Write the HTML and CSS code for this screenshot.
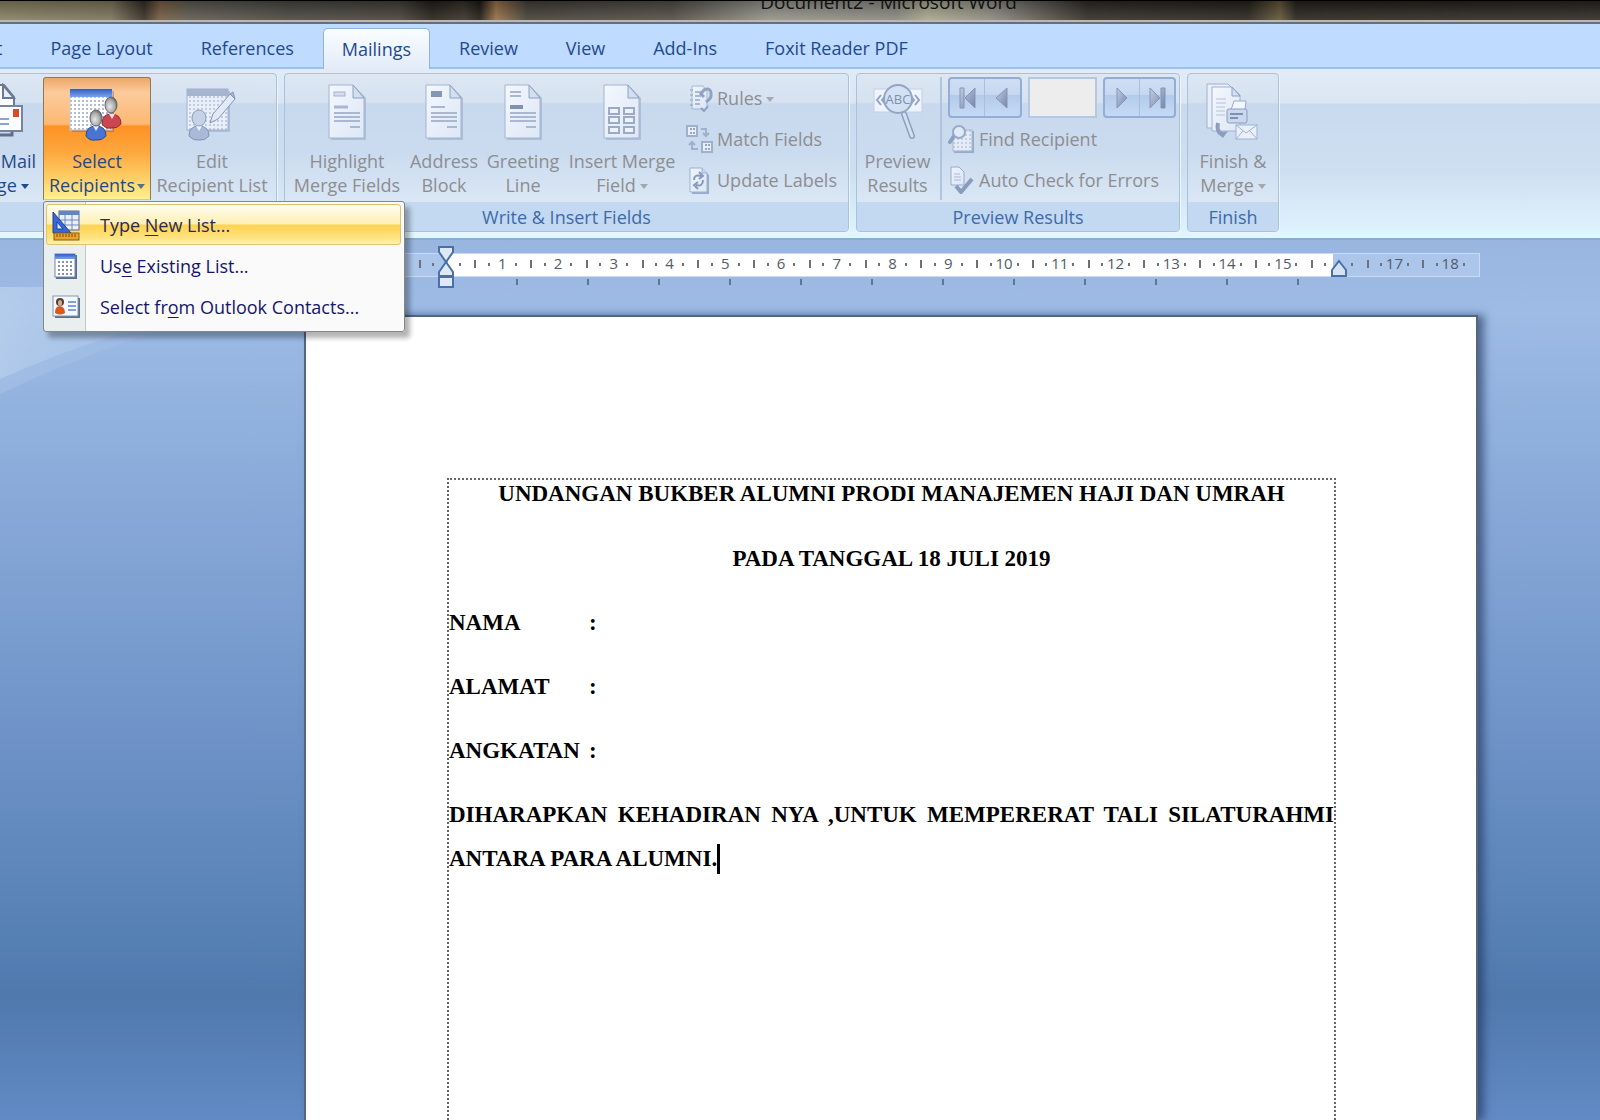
FILE: index.html
```html
<!DOCTYPE html>
<html lang="id">
<head>
  <meta charset="UTF-8">
  <title>Document2 - Microsoft Word</title>
  <link rel="stylesheet" href="styles.css">
</head>
<body>
  <!-- Shared icon parts -->
  <svg class="defs" aria-hidden="true">
    <defs>
      <linearGradient id="paper" x1="0" y1="0" x2="1" y2="1">
        <stop offset="0" stop-color="#f4f8fe"/>
        <stop offset="1" stop-color="#dde7f6"/>
      </linearGradient>
      <linearGradient id="tri" x1="0" y1="0" x2="1" y2="1">
        <stop offset="0" stop-color="#c3cde0"/>
        <stop offset="1" stop-color="#7286ab"/>
      </linearGradient>
      <linearGradient id="blueHead" x1="0" y1="0" x2="0" y2="1">
        <stop offset="0" stop-color="#2f5cc0"/>
        <stop offset="1" stop-color="#7ba3ec"/>
      </linearGradient>
      <radialGradient id="head" cx="0.4" cy="0.6" r="0.7">
        <stop offset="0" stop-color="#e8e8e8"/>
        <stop offset="0.6" stop-color="#a9a9a9"/>
        <stop offset="1" stop-color="#4c4c4c"/>
      </radialGradient>
      <pattern id="dots" width="4" height="4" patternUnits="userSpaceOnUse">
        <rect width="4" height="4" fill="#fff"/>
        <rect x="1" y="1" width="2" height="2" fill="#b3bccf"/>
      </pattern>
      <pattern id="dotsGray" width="4" height="4" patternUnits="userSpaceOnUse">
        <rect width="4" height="4" fill="#eaf0fa"/>
        <rect x="1" y="1" width="2" height="2" fill="#c2cde0"/>
      </pattern>
      <symbol id="page" viewBox="0 0 56 58">
        <path d="M12 4 H36 L47 15 V57 H12 Z" fill="#8fa2c2" opacity="0.5"/>
        <path d="M10 2 H34 L45 14 V55 H10 Z" fill="url(#paper)" stroke="#a3b4d1"/>
        <path d="M34 2 V15 H45 Z" fill="#d3dff1" stroke="#8ea1c2"/>
      </symbol>
    </defs>
  </svg>

  <header class="titlebar">
    <span class="title">Document2 - Microsoft Word</span>
  </header>

  <nav class="tabs">
    <a class="tab" href="#insert">Insert</a>
    <a class="tab" href="#layout">Page Layout</a>
    <a class="tab" href="#references">References</a>
    <a class="tab active" href="#mailings">Mailings</a>
    <a class="tab" href="#review">Review</a>
    <a class="tab" href="#view">View</a>
    <a class="tab" href="#addins">Add-Ins</a>
    <a class="tab" href="#foxit">Foxit Reader PDF</a>
  </nav>

  <div class="ribbon">
    <section class="group start-group">
      <div class="group-body">
        <button class="big" type="button">
          <svg class="icon" viewBox="0 0 56 58">
            <path d="M24 2 H36 L46 14 V30 H24 Z" fill="#fff" stroke="#6b7a94" stroke-width="2"/>
            <path d="M35 2 V15 H46 Z" fill="#e8eef8" stroke="#6b7a94" stroke-width="2"/>
            <path d="M22 52 H44 V44 H50 V36" fill="none" stroke="#5f6f8b" stroke-width="3"/>
            <rect x="14" y="23" width="40" height="25" fill="#fdfdff" stroke="#7485a3" stroke-width="2"/>
            <rect x="45" y="26" width="6" height="8" fill="#d9482b"/>
            <path d="M24 36 H41 M24 41 H41" stroke="#8aa3cf" stroke-width="2"/>
          </svg>
          <span>Start Mail</span>
          <span>Merge<i class="arrow"></i></span>
        </button>
        <div class="dropdown">
          <button class="big open" type="button" aria-haspopup="true" aria-expanded="true">
            <svg class="icon" viewBox="0 0 56 58">
              <rect x="3" y="8" width="42" height="41" fill="#7a5a3a" opacity="0.4"/>
              <rect x="1" y="6" width="42" height="41" fill="url(#dots)" stroke="#c3cbdc"/>
              <rect x="1" y="6" width="42" height="8" fill="url(#blueHead)"/>
              <path d="M33 41 Q33 31 42 31 Q52 31 52 41 Q48 46 42 45 Q36 46 33 41 Z" fill="#cc4550" stroke="#8b2a38"/>
              <path d="M40 31 L43 36 L46 31 Z" fill="#f6dede"/>
              <ellipse cx="42" cy="22" rx="6" ry="8" fill="url(#head)" stroke="#666"/>
              <path d="M17 53 Q17 43 27 43 Q37 43 37 53 Q33 58 27 57 Q20 58 17 53 Z" fill="#4a74d2" stroke="#274a9c"/>
              <path d="M24 43 L27 48 L30 43 Z" fill="#e4ecfb"/>
              <ellipse cx="27" cy="35" rx="6" ry="8" fill="url(#head)" stroke="#666"/>
            </svg>
            <span>Select</span>
            <span>Recipients<i class="arrow"></i></span>
          </button>
          <div class="menu">
            <button class="menu-item hot" type="button">
              <svg viewBox="0 0 28 32">
                <rect x="7" y="2" width="20" height="19" fill="#e9f0fc" stroke="#4b66a0"/>
                <rect x="7" y="2" width="20" height="4" fill="#6484c4"/>
                <path d="M7 11 H27 M7 16 H27 M13 6 V21 M20 6 V21" stroke="#6f88bb" fill="none"/>
                <path d="M1 3 V24 H19 Z" fill="#3567d6" stroke="#1e409a"/>
                <path d="M5 13 V20 H11 Z" fill="#dce8ff" stroke="#1e409a"/>
                <rect x="2" y="24" width="25" height="7" fill="#e7a52d" stroke="#8c5c14"/>
                <path d="M5 25 V28 M8 25 V28 M11 25 V28 M14 25 V28 M17 25 V28 M20 25 V28 M23 25 V28" stroke="#7a4d0d"/>
              </svg>
              <span>Type <u>N</u>ew List...</span>
            </button>
            <button class="menu-item" type="button">
              <svg viewBox="0 0 28 32">
                <rect x="4" y="5" width="21" height="24" fill="#5b6e8c"/>
                <rect x="3" y="4" width="20" height="23" fill="#fff" stroke="#7085ad"/>
                <rect x="3" y="4" width="20" height="5" fill="url(#blueHead)"/>
                <path d="M6 12 H21 M6 16 H21 M6 20 H21 M6 24 H21" stroke="#8592ad" stroke-width="2" stroke-dasharray="2 2"/>
              </svg>
              <span>Us<u>e</u> Existing List...</span>
            </button>
            <button class="menu-item" type="button">
              <svg viewBox="0 0 28 32">
                <rect x="3" y="7" width="25" height="20" fill="#5b6e8c"/>
                <rect x="1" y="5" width="25" height="20" fill="#f4f8ff" stroke="#8496b5"/>
                <ellipse cx="8" cy="11" rx="4" ry="4" fill="#5a3d28"/>
                <ellipse cx="8" cy="12" rx="2" ry="3" fill="#c9b09a"/>
                <path d="M3 22 Q3 15 8 15 Q13 16 13 22 Q8 25 3 22 Z" fill="#d9591b"/>
                <path d="M16 11 H24 M16 15 H24 M16 19 H24" stroke="#7fa0d8" stroke-width="2"/>
              </svg>
              <span>Select fr<u>o</u>m Outlook Contacts...</span>
            </button>
          </div>
        </div>
        <button class="big edit" type="button" disabled>
          <svg class="icon" viewBox="0 0 56 58">
            <rect x="5" y="8" width="41" height="41" fill="#8fa2c2" opacity="0.5"/>
            <rect x="3" y="6" width="41" height="41" fill="url(#dotsGray)" stroke="#9fb0cd"/>
            <rect x="3" y="6" width="41" height="7" fill="#a5b5d0"/>
            <path d="M5 53 Q5 43 15 43 Q25 43 25 53 Q21 58 15 57 Q9 58 5 53 Z" fill="#a9bad8" stroke="#7f93b7"/>
            <path d="M12 43 L15 48 L18 43 Z" fill="#eef3fb"/>
            <ellipse cx="15" cy="35" rx="7" ry="8" fill="#c6d2e6" stroke="#8c9dbd"/>
            <path d="M26 40 L29 31 L46 11 L51 16 L34 36 Z" fill="#e2eaf6" stroke="#8294b5"/>
            <path d="M46 11 L51 16 L49 9 Z" fill="#a9b8d3" stroke="#8294b5"/>
          </svg>
          <span>Edit</span>
          <span>Recipient List</span>
        </button>
      </div>
      <div class="group-label"></div>
    </section>

    <section class="group">
      <div class="group-body write-grid">
        <button class="big" type="button" disabled>
          <svg class="icon" viewBox="0 0 56 58">
            <use href="#page"/>
            <rect x="15" y="9" width="11" height="4" fill="#d6dfee" stroke="#a3b1cb"/>
            <path d="M15 24 H29" stroke="#a9b7d0" stroke-width="3"/>
            <path d="M15 30 H41 M15 34 H41 M15 38 H41 M31 44 H41" stroke="#a9b7d0" stroke-width="2"/>
          </svg>
          <span>Highlight</span>
          <span>Merge Fields</span>
        </button>
        <button class="big" type="button" disabled>
          <svg class="icon" viewBox="0 0 56 58">
            <use href="#page"/>
            <rect x="15" y="8" width="11" height="6" fill="#8496b8"/>
            <path d="M15 24 H29 M15 30 H41 M15 34 H41 M15 38 H41 M31 44 H41" stroke="#a9b7d0" stroke-width="2"/>
          </svg>
          <span>Address</span>
          <span>Block</span>
        </button>
        <button class="big" type="button" disabled>
          <svg class="icon" viewBox="0 0 56 58">
            <use href="#page"/>
            <path d="M15 9 H26 M15 13 H26 M15 30 H41 M15 34 H41 M15 38 H41 M31 44 H41" stroke="#a9b7d0" stroke-width="2"/>
            <path d="M15 24 H28" stroke="#8093b6" stroke-width="4"/>
          </svg>
          <span>Greeting</span>
          <span>Line</span>
        </button>
        <button class="big" type="button" disabled>
          <svg class="icon" viewBox="0 0 56 58">
            <use href="#page"/>
            <g fill="#eef3fb" stroke="#9baac6" stroke-width="2">
              <rect x="15" y="25" width="10" height="6"/><rect x="30" y="25" width="10" height="6"/>
              <rect x="15" y="34" width="10" height="6"/><rect x="30" y="34" width="10" height="6"/>
              <rect x="15" y="44" width="10" height="6"/><rect x="30" y="44" width="10" height="6"/>
            </g>
          </svg>
          <span>Insert Merge</span>
          <span>Field<i class="arrow"></i></span>
        </button>
        <div class="small-list">
          <button class="small" type="button" disabled>
            <svg viewBox="0 0 28 28">
              <path d="M6 2 H17 L21 7 V25 H6 Z" fill="url(#paper)" stroke="#9dafcd"/>
              <path d="M4 6 H7 M4 11 H7 M4 16 H7 M4 21 H7" stroke="#8497b9"/>
              <path d="M9 8 H15 M9 12 H15 M9 16 H14 M9 20 H14" stroke="#a4b3cf" stroke-width="2"/>
              <path d="M14 9 L18 13 M14 11 L18 6 Q25 3 25 10 Q26 14 20 18" fill="none" stroke="#8598ba" stroke-width="3"/>
              <path d="M15 24 L18 27 L22 22" fill="none" stroke="#8598ba" stroke-width="2"/>
            </svg>
            <span>Rules<i class="arrow"></i></span>
          </button>
          <button class="small" type="button" disabled>
            <svg viewBox="0 0 28 28">
              <rect x="1" y="1" width="10" height="10" fill="#eef3fb" stroke="#97a9c9" stroke-width="2"/>
              <path d="M4 4 H9 M4 8 H9" stroke="#8b9ec0" stroke-width="2" stroke-dasharray="2 1"/>
              <rect x="16" y="17" width="10" height="10" fill="#eef3fb" stroke="#97a9c9" stroke-width="2"/>
              <path d="M19 20 H24 M19 24 H24" stroke="#8b9ec0" stroke-width="2" stroke-dasharray="2 1"/>
              <path d="M15 4 H20 V10 M17 8 L20 11 L23 8 M12 24 H6 V18 M3 20 L6 17 L9 20" fill="none" stroke="#97a9c9" stroke-width="2"/>
            </svg>
            <span>Match Fields</span>
          </button>
          <button class="small" type="button" disabled>
            <svg viewBox="0 0 28 28">
              <path d="M6 4 H18 L23 9 V28 H6 Z" fill="#8fa2c2"/>
              <path d="M4 2 H16 L21 7 V26 H4 Z" fill="url(#paper)" stroke="#97a9c9"/>
              <path d="M16 2 V7 H21" fill="#cbd8ec" stroke="#97a9c9"/>
              <path d="M8 14 Q8 8 15 10 M13 6 L17 10 L13 13 M17 14 Q17 21 10 19 M12 16 L8 19 L12 23" fill="none" stroke="#7a8eb4" stroke-width="2"/>
            </svg>
            <span>Update Labels</span>
          </button>
        </div>
      </div>
      <div class="group-label">Write &amp; Insert Fields</div>
    </section>

    <section class="group">
      <div class="group-body preview-grid">
        <button class="big" type="button" disabled>
          <svg class="icon" viewBox="0 0 56 58">
            <rect x="4" y="6" width="48" height="23" fill="#eff4fc" stroke="#c3d0e5"/>
            <path d="M11 12 L7 17 L11 22 M16 12 L12 17 L16 22 M40 12 L44 17 L40 22 M45 12 L49 17 L45 22" fill="none" stroke="#92a3c2" stroke-width="2"/>
            <path d="M34 31 L42 53" stroke="#8d9fbe" stroke-width="6" stroke-linecap="round"/>
            <path d="M34 31 L42 53" stroke="#d5dfef" stroke-width="3" stroke-linecap="round"/>
            <circle cx="28" cy="16" r="14" fill="#d3e1f4" stroke="#94a5c2" stroke-width="2"/>
            <text x="28" y="21" class="abc">ABC</text>
          </svg>
          <span>Preview</span>
          <span>Results</span>
        </button>
        <div class="small-list record-list">
          <div class="record-nav">
            <div class="nav-pair">
              <button type="button" disabled aria-label="First record">
                <svg viewBox="0 0 20 24"><path d="M3 2 H7 V22 H3 Z M18 2 V22 L8 12 Z" fill="url(#tri)" stroke="#8395b8"/></svg>
              </button>
              <button type="button" disabled aria-label="Previous record">
                <svg viewBox="0 0 20 24"><path d="M15 2 V22 L4 12 Z" fill="url(#tri)" stroke="#8395b8"/></svg>
              </button>
            </div>
            <input class="record" type="text" aria-label="Record number" disabled>
            <div class="nav-pair">
              <button type="button" disabled aria-label="Next record">
                <svg viewBox="0 0 20 24"><path d="M5 2 V22 L15 12 Z" fill="url(#tri)" stroke="#8395b8"/></svg>
              </button>
              <button type="button" disabled aria-label="Last record">
                <svg viewBox="0 0 20 24"><path d="M3 2 V22 L13 12 Z M14 2 H18 V22 H14 Z" fill="url(#tri)" stroke="#8395b8"/></svg>
              </button>
            </div>
          </div>
          <button class="small" type="button" disabled>
            <svg viewBox="0 0 28 28">
              <rect x="6" y="6" width="20" height="22" fill="#8fa2c2"/>
              <rect x="5" y="5" width="19" height="21" fill="url(#dotsGray)" stroke="#a0b1ce"/>
              <path d="M6 11 L2 17" stroke="#8397ba" stroke-width="4" stroke-linecap="round"/>
              <circle cx="11" cy="7" r="6" fill="#e6eef9" stroke="#8fa2c2" stroke-width="2"/>
            </svg>
            <span>Find Recipient</span>
          </button>
          <button class="small" type="button" disabled>
            <svg viewBox="0 0 28 28">
              <path d="M3 1 H11 L16 6 V19 H3 Z" fill="url(#paper)" stroke="#8fa2c2"/>
              <path d="M6 8 H12 M6 11 H13 M6 14 H13" stroke="#a4b3cf"/>
              <path d="M8 20 L13 26 L24 13" fill="none" stroke="#7d90b4" stroke-width="4"/>
            </svg>
            <span>Auto Check for Errors</span>
          </button>
        </div>
      </div>
      <div class="group-label">Preview Results</div>
    </section>

    <section class="group">
      <div class="group-body finish-grid">
        <button class="big" type="button" disabled>
          <svg class="icon" viewBox="0 0 56 58">
            <path d="M2 1 H23 L30 8 V45 H2 Z" fill="#e8eff9" stroke="#a0b1ce"/>
            <path d="M7 4 H27 L35 12 V48 H7 Z" fill="url(#paper)" stroke="#a0b1ce"/>
            <path d="M27 4 V13 H35 Z" fill="#d3dff1" stroke="#8ea1c2"/>
            <path d="M11 16 H21 M11 20 H21 M11 24 H20 M11 28 H20 M11 32 H20" stroke="#b4c1d8"/>
            <path d="M26 27 L29 18 H41 L40 27 Z" fill="#f3f7fd" stroke="#9aabc9"/>
            <rect x="22" y="26" width="20" height="14" rx="2" fill="#cbd7ea" stroke="#8b9dbd"/>
            <path d="M25 31 H38 M25 35 H33" stroke="#7f92b5" stroke-width="2"/>
            <path d="M13 40 Q11 49 17 51" fill="none" stroke="#8c9dbf" stroke-width="4"/>
            <path d="M12 50 L18 55 L23 48 Z" fill="#8c9dbf"/>
            <rect x="31" y="42" width="21" height="14" fill="#eaf0fa" stroke="#a0b1ce"/>
            <path d="M31 42 L41 50 L52 42 M31 56 L38 48 M52 56 L45 48" fill="none" stroke="#a0b1ce"/>
          </svg>
          <span>Finish &amp;</span>
          <span>Merge<i class="arrow"></i></span>
        </button>
      </div>
      <div class="group-label">Finish</div>
    </section>
  </div>

  <main class="workspace">
    <!-- Light swoosh behind the page -->
    <svg class="swoosh" viewBox="0 0 300 120" aria-hidden="true">
      <defs>
        <linearGradient id="fade" x1="0" y1="0" x2="1" y2="0">
          <stop offset="0" stop-color="#c3d8f1" stop-opacity="0.6"/>
          <stop offset="1" stop-color="#b4cbec" stop-opacity="0"/>
        </linearGradient>
      </defs>
      <path d="M0 0 H300 Q120 38 0 92 Z" fill="url(#fade)"/>
      <path d="M0 92 Q120 38 300 0 Q120 50 0 107 Z" fill="url(#fade)" opacity="0.4"/>
    </svg>

    <div class="ruler">
      <span class="cm"></span>
      <span class="cm"></span>
      <span class="cm">
        <svg class="marker" viewBox="0 0 16 42">
          <g fill="#dfe9f5" stroke="#4a70a8" stroke-width="2">
            <path d="M1 1 H15 V6 L8 16 L1 6 Z"/>
            <path d="M8 16 L15 26 V30 H1 V26 Z"/>
            <path d="M1 31 H15 V41 H1 Z"/>
          </g>
        </svg>
      </span>
      <span class="cm">1</span>
      <span class="cm">2</span>
      <span class="cm">3</span>
      <span class="cm">4</span>
      <span class="cm">5</span>
      <span class="cm">6</span>
      <span class="cm">7</span>
      <span class="cm">8</span>
      <span class="cm">9</span>
      <span class="cm">10</span>
      <span class="cm">11</span>
      <span class="cm">12</span>
      <span class="cm">13</span>
      <span class="cm">14</span>
      <span class="cm">15</span>
      <span class="cm">
        <svg class="marker" viewBox="0 0 16 42">
          <path d="M8 15 L15 24 V30 H1 V24 Z" fill="#d5e2f2" stroke="#4a70a8" stroke-width="2"/>
        </svg>
      </span>
      <span class="cm">17</span>
      <span class="cm">18</span>
    </div>
    <div class="tab-stops"></div>

    <article class="page">
      <div class="text-area">
        <h1>UNDANGAN BUKBER ALUMNI PRODI MANAJEMEN HAJI DAN UMRAH</h1>
        <h2>PADA TANGGAL 18 JULI 2019</h2>
        <p><span class="field">NAMA</span>:</p>
        <p><span class="field">ALAMAT</span>:</p>
        <p><span class="field">ANGKATAN</span>:</p>
        <p class="body-text">DIHARAPKAN KEHADIRAN NYA ,UNTUK MEMPERERAT TALI SILATURAHMI ANTARA PARA ALUMNI.<span class="caret"></span></p>
      </div>
    </article>
  </main>
</body>
</html>
```

FILE: styles.css
```css
* {
  box-sizing: border-box;
}
body {
  margin: 0;
  min-height: 100vh;
  display: flex;
  flex-direction: column;
  font-family: "Open Sans", "Noto Sans", sans-serif;
  font-size: 18px;
  overflow: hidden;
}
button {
  font: inherit;
  color: inherit;
  background: none;
  border: 0;
  padding: 0;
}
.defs {
  position: absolute;
  width: 0;
  height: 0;
}

/* Glass title bar, text is cut by the top edge */
.titlebar {
  height: 24px;
  display: flex;
  justify-content: center;
  overflow: hidden;
  border-bottom: 2px solid #66707c;
  box-shadow: inset 0 1px 0 #000, inset 0 -2px 0 #b9b7ae;
  background:
    linear-gradient(to bottom, rgba(0, 0, 0, 0.4), rgba(120, 120, 115, 0.3)),
    linear-gradient(to right, #a69b77 0%, #958a6c 7%, #3a3228 9%, #8f6d4d 10%, #6d6a60 12%, #55524a 18%, #4f4b42 25%, #262019 27%, #3c362c 29%, #1f1a14 30%, #b98752 31%, #4c4840 33%, #5f5b52 42%, #b5b3aa 48%, #a8a69c 56%, #d0cfaf 58%, #aaa89d 62%, #35302a 68%, #2a251f 78%, #75643f 80%, #2a251f 81%, #312b25 100%);
}
.title {
  margin-left: 177px;
  margin-top: -11px;
  font-size: 19px;
  line-height: 26px;
  color: #111;
}

.tabs {
  display: flex;
  gap: 10px;
  height: 45px;
  padding-top: 4px;
  background: #bfdbff;
  border-bottom: 2px solid #9dbfe9;
}
.tab {
  padding: 0 19px;
  height: 41px;
  line-height: 40px;
  color: #1f4a8c;
  text-decoration: none;
  white-space: nowrap;
}
.tab:first-child {
  margin-left: -65px;
}
.tab.active {
  background: linear-gradient(to bottom, #fafdff, #e2ecf8);
  border: 1px solid #8db2e3;
  border-bottom: 0;
  border-radius: 5px 5px 0 0;
  padding: 0 18px;
}

.ribbon {
  display: flex;
  gap: 7px;
  padding: 4px 0 6px;
  background: linear-gradient(to bottom, #e2ebf7 0%, #dbe6f4 20%, #c9daf0 21%, #cfdff1 60%, #dcf0fb 92%, #dff9ff 100%);
  border-bottom: 2px solid #8aaccc;
}
.group {
  border: 1px solid #a9c2dc;
  border-radius: 4px;
  box-shadow: 1px 1px 0 #eef6fd;
  background: linear-gradient(to bottom, #dde7f3 0%, #d6e2f1 18%, #c8d9ee 19%, #cbdbef 50%, #dae7f5 82%);
}
.start-group {
  margin-left: -55px;
}
.group-body {
  display: flex;
  height: 128px;
  padding: 3px;
}
.group-label {
  height: 29px;
  line-height: 30px;
  text-align: center;
  color: #3e6aaa;
  background: #c2d9f1;
  border-radius: 0 0 4px 4px;
}

/* Large buttons: icon over two lines of text */
.big {
  width: 100%;
  height: 123px;
  display: flex;
  flex-direction: column;
  align-items: center;
  padding-top: 6px;
  line-height: 24px;
  color: #1f4a8c;
  white-space: nowrap;
}
.big:disabled,
.small:disabled {
  color: #8d8e90;
}
.start-group .big {
  width: 94px;
}
.start-group .edit {
  width: 122px;
}
.start-group .open {
  width: 108px;
  padding-top: 5px;
  border: 1px solid #8e7a55;
  border-bottom-color: #f2c84a;
  border-radius: 3px 3px 0 0;
  background: linear-gradient(to bottom, #eda869 0%, #fccb9b 12%, #fdb873 38%, #fd9225 40%, #fda63c 60%, #fed36b 85%, #fff08f 100%);
}
.icon {
  width: 56px;
  height: 58px;
  margin-bottom: 8px;
}
.arrow {
  display: inline-block;
  margin-left: 4px;
  vertical-align: 3px;
  border: 4px solid transparent;
  border-top: 5px solid currentColor;
  border-bottom: 0;
}
:disabled .arrow {
  opacity: 0.7;
}
.open .arrow {
  margin-left: 2px;
  border-top-color: #55708c;
}
.abc {
  font-size: 13px;
  text-anchor: middle;
  fill: #7f8fae;
}

.write-grid {
  display: grid;
  grid-template-columns: 118px 76px 82px 116px 165px;
}
.preview-grid {
  display: grid;
  grid-template-columns: 75px 241px;
}
.finish-grid {
  width: 90px;
}
.small-list {
  display: flex;
  flex-direction: column;
  padding-left: 6px;
}
.small {
  display: flex;
  align-items: center;
  gap: 3px;
  height: 41px;
  white-space: nowrap;
}
.small svg {
  width: 28px;
  height: 28px;
  opacity: 0.85;
}
.record-list {
  margin-left: 5px;
  border-left: 2px solid #b0c4de;
}
.record-nav {
  display: flex;
  gap: 6px;
  height: 41px;
}
.nav-pair {
  display: flex;
  width: 74px;
  border: 2px solid #93add4;
  border-radius: 4px;
  background: linear-gradient(to bottom, #cfdef3 0%, #c6d8f0 42%, #b4caea 44%, #c5daf4 100%);
}
.nav-pair button {
  flex: 1;
  display: flex;
  align-items: center;
  justify-content: center;
}
.nav-pair button + button {
  border-left: 1px solid #a9bfe0;
}
.nav-pair svg {
  width: 20px;
  height: 24px;
}
.record {
  width: 69px;
  border: 2px solid #b4c8e2;
  background: #ededed;
}

/* Drop-down list under Select Recipients */
.dropdown {
  position: relative;
}
.menu {
  position: absolute;
  z-index: 5;
  top: 124px;
  left: 0;
  width: 362px;
  padding: 2px 3px 4px 2px;
  border: 1px solid #868686;
  border-radius: 3px;
  background: linear-gradient(to right, #e9eeee 41px, #c5c5c5 41px, #c5c5c5 42px, #fafafa 42px);
  box-shadow: 5px 6px 5px rgba(0, 0, 0, 0.3);
}
.menu-item {
  width: 100%;
  height: 41px;
  display: flex;
  align-items: center;
  gap: 20px;
  padding-left: 5px;
  border: 1px solid transparent;
  border-radius: 3px;
  color: #15156e;
  white-space: nowrap;
}
.menu-item svg {
  width: 28px;
  height: 32px;
}
.menu-item.hot {
  color: #262a5c;
  border-color: #dfc26c;
  background: linear-gradient(to bottom, #fffdf0 0%, #fff0b4 48%, #ffd34d 52%, #ffe384 85%, #fff3b0 100%);
}
.menu-item u {
  text-underline-offset: 3px;
}

.workspace {
  position: relative;
  flex: 1;
  display: flex;
  flex-direction: column;
  padding: 13px 122px 0 304px;
  background: linear-gradient(to bottom, #98b6e0 0%, #9dbbe5 8%, #88a9d8 30%, #6f93c8 56%, #5580b4 80%, #5079ae 86%, #628ac4 100%);
}
.swoosh {
  position: absolute;
  left: 0;
  top: 47px;
  width: 300px;
  height: 120px;
}

.ruler {
  position: relative;
  display: flex;
  height: 24px;
  margin: 0 -2px 0 3px;
  padding-right: 1px;
  border: 1px solid #c9dcf5;
  border-left: 0;
  background: linear-gradient(to right, #abc6ea 12%, #fff 12%, #fff 87.5%, #abc6ea 87.5%);
}
/* One centimetre: half mark on the left edge, quarter dots beside the number */
.cm {
  flex: 1;
  display: flex;
  align-items: center;
  justify-content: center;
  padding-bottom: 3px;
  font-size: 15px;
  line-height: 19px;
  color: #555a66;
  background:
    linear-gradient(#6c717c, #6c717c) 0 40% / 2px 8px no-repeat,
    linear-gradient(#6c717c, #6c717c) 25% 45% / 2px 3px no-repeat,
    linear-gradient(#6c717c, #6c717c) 75% 45% / 2px 3px no-repeat;
}
.marker {
  flex: none;
  width: 16px;
  height: 42px;
  margin-top: 6px;
}
.tab-stops {
  height: 6px;
  margin: 2px 0 0 143px;
  width: 860px;
  background: repeating-linear-gradient(to right, transparent 0, transparent 69px, #5f7594 69px, #5f7594 71px);
}

.page {
  flex: 1;
  margin-top: 30px;
  padding: 161px 140px 0 141px;
  background: #fff;
  border: 2px solid #56657c;
  border-bottom: 0;
  box-shadow: 6px 0 8px rgba(30, 50, 90, 0.6);
  position: relative;
  display: flex;
}
.text-area {
  flex: 1;
  border: 2px dotted #666;
  border-bottom: 0;
  font-family: "Liberation Serif", serif;
  font-size: 23px;
  font-weight: bold;
  line-height: 44px;
  color: #000;
}
.text-area h1,
.text-area h2 {
  margin: 0 0 20px;
  font-size: 23px;
  text-align: center;
}
.text-area h1 {
  margin-bottom: 30px;
  line-height: 27px;
}
.text-area p {
  margin: 0 0 20px;
}
.field {
  display: inline-block;
  width: 140px;
}
.body-text {
  text-align: justify;
}
.caret {
  display: inline-block;
  width: 3px;
  height: 30px;
  vertical-align: -8px;
  background: #000;
}
```
